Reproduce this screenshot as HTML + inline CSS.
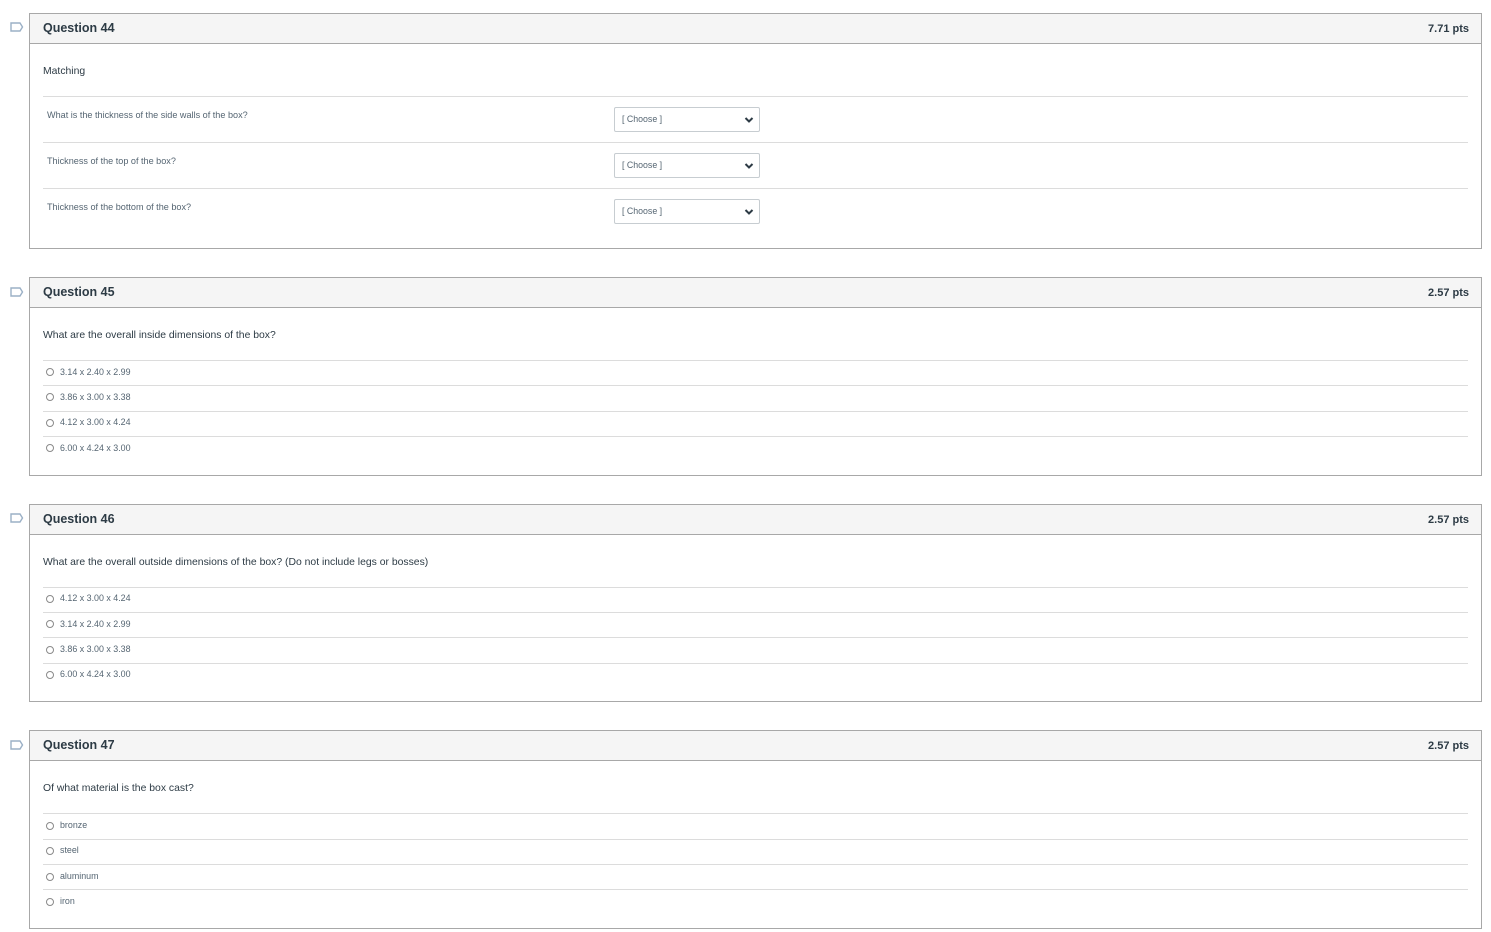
<!DOCTYPE html>
<html><head><meta charset="utf-8">
<style>
*{margin:0;padding:0;box-sizing:border-box}
body{width:1491px;height:932px;background:#fff;font-family:"Liberation Sans",sans-serif;position:relative;overflow:hidden;color:#2d3b45}
.box{position:absolute;left:29px;width:1453px;border:1px solid #a8a8a8;background:#fff}
.hd{position:absolute;left:0;top:0;right:0;height:30px;background:#f5f5f5;border-bottom:1px solid #a8a8a8}
.t{position:absolute;line-height:14px;white-space:nowrap}
.title{font-size:12.5px;color:#2d3b45;left:13px;top:7px;font-weight:bold}
.pts{font-size:11px;right:12px;top:8px;color:#2d3b45;font-weight:bold}
.q{font-size:10.4px;color:#2d3b45}
.s{font-size:9.1px;color:#556572}
.opt{font-size:8.9px;color:#556572}
.hr{position:absolute;left:43px;width:1425px;height:1px;background:#dcdcdc}
.rad{position:absolute;left:46px;width:8px;height:8px;border:1px solid #8a8a8a;border-radius:50%}
.sel{position:absolute;left:614px;width:146px;height:25px;border:1px solid #c7cdd1;border-radius:2px;background:#fff}
.sel span{position:absolute;left:7px;top:6px;font-size:8.8px;color:#556572}
.sel svg{position:absolute;right:5px;top:8px}
.flag{position:absolute;left:10px}
</style></head><body>

<svg class="flag" style="top:22px" width="14" height="10" viewBox="0 0 14 10"><path d="M1 1H10L12.5 5L10 9H1Z" fill="none" stroke="#9bb0c6" stroke-width="1.4"/></svg>
<div class="box" style="top:13px;height:236px"><div class="hd"><div class="t title">Question 44</div><div class="t pts">7.71 pts</div></div></div>
<div class="t q" style="left:43px;top:65px">Matching</div>
<div class="hr" style="top:96px"></div>
<div class="t s" style="left:47px;top:108px">What is the thickness of the side walls of the box?</div>
<div class="sel" style="top:107px"><span>[ Choose ]</span><svg width="10" height="8" viewBox="0 0 10 8"><path d="M1.5 2L5 5.5L8.5 2" fill="none" stroke="#2d3b45" stroke-width="2"/></svg></div>
<div class="hr" style="top:142px"></div>
<div class="t s" style="left:47px;top:154px">Thickness of the top of the box?</div>
<div class="sel" style="top:153px"><span>[ Choose ]</span><svg width="10" height="8" viewBox="0 0 10 8"><path d="M1.5 2L5 5.5L8.5 2" fill="none" stroke="#2d3b45" stroke-width="2"/></svg></div>
<div class="hr" style="top:188px"></div>
<div class="t s" style="left:47px;top:200px">Thickness of the bottom of the box?</div>
<div class="sel" style="top:199px"><span>[ Choose ]</span><svg width="10" height="8" viewBox="0 0 10 8"><path d="M1.5 2L5 5.5L8.5 2" fill="none" stroke="#2d3b45" stroke-width="2"/></svg></div>

<svg class="flag" style="top:287px" width="14" height="10" viewBox="0 0 14 10"><path d="M1 1H10L12.5 5L10 9H1Z" fill="none" stroke="#9bb0c6" stroke-width="1.4"/></svg>
<div class="box" style="top:277px;height:199px"><div class="hd"><div class="t title">Question 45</div><div class="t pts">2.57 pts</div></div></div>
<div class="t q" style="left:43px;top:329px">What are the overall inside dimensions of the box?</div>
<div class="hr" style="top:360px"></div><div class="rad" style="top:368px"></div><div class="t opt" style="left:60px;top:365px">3.14 x 2.40 x 2.99</div>
<div class="hr" style="top:385px"></div><div class="rad" style="top:393px"></div><div class="t opt" style="left:60px;top:390px">3.86 x 3.00 x 3.38</div>
<div class="hr" style="top:411px"></div><div class="rad" style="top:419px"></div><div class="t opt" style="left:60px;top:415px">4.12 x 3.00 x 4.24</div>
<div class="hr" style="top:436px"></div><div class="rad" style="top:444px"></div><div class="t opt" style="left:60px;top:441px">6.00 x 4.24 x 3.00</div>

<svg class="flag" style="top:513px" width="14" height="10" viewBox="0 0 14 10"><path d="M1 1H10L12.5 5L10 9H1Z" fill="none" stroke="#9bb0c6" stroke-width="1.4"/></svg>
<div class="box" style="top:504px;height:198px"><div class="hd"><div class="t title">Question 46</div><div class="t pts">2.57 pts</div></div></div>
<div class="t q" style="left:43px;top:556px">What are the overall outside dimensions of the box? (Do not include legs or bosses)</div>
<div class="hr" style="top:587px"></div><div class="rad" style="top:595px"></div><div class="t opt" style="left:60px;top:591px">4.12 x 3.00 x 4.24</div>
<div class="hr" style="top:612px"></div><div class="rad" style="top:620px"></div><div class="t opt" style="left:60px;top:617px">3.14 x 2.40 x 2.99</div>
<div class="hr" style="top:637px"></div><div class="rad" style="top:646px"></div><div class="t opt" style="left:60px;top:642px">3.86 x 3.00 x 3.38</div>
<div class="hr" style="top:663px"></div><div class="rad" style="top:671px"></div><div class="t opt" style="left:60px;top:667px">6.00 x 4.24 x 3.00</div>

<svg class="flag" style="top:740px" width="14" height="10" viewBox="0 0 14 10"><path d="M1 1H10L12.5 5L10 9H1Z" fill="none" stroke="#9bb0c6" stroke-width="1.4"/></svg>
<div class="box" style="top:730px;height:199px"><div class="hd"><div class="t title">Question 47</div><div class="t pts">2.57 pts</div></div></div>
<div class="t q" style="left:43px;top:782px">Of what material is the box cast?</div>
<div class="hr" style="top:813px"></div><div class="rad" style="top:822px"></div><div class="t opt" style="left:60px;top:818px">bronze</div>
<div class="hr" style="top:839px"></div><div class="rad" style="top:847px"></div><div class="t opt" style="left:60px;top:843px">steel</div>
<div class="hr" style="top:864px"></div><div class="rad" style="top:873px"></div><div class="t opt" style="left:60px;top:869px">aluminum</div>
<div class="hr" style="top:889px"></div><div class="rad" style="top:898px"></div><div class="t opt" style="left:60px;top:894px">iron</div>

</body></html>
